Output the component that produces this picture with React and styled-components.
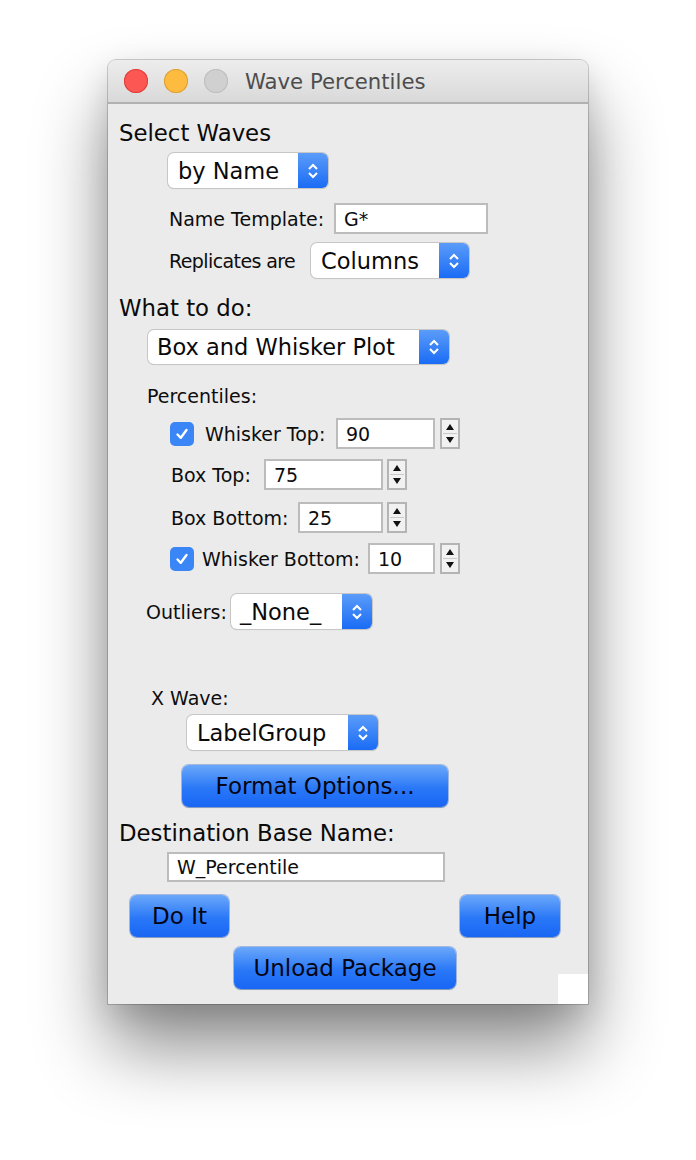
import React from "react";
import styled, { createGlobalStyle } from "styled-components";

const GlobalStyle = createGlobalStyle`
  html, body {
    margin: 0;
    padding: 0;
    background: #ffffff;
  }
  body {
    font-family: "Lucida Grande", "DejaVu Sans", sans-serif;
    color: #111;
  }
`;

const Page = styled.div`
  width: 696px;
  height: 1160px;
  padding: 60px 0 0 108px;
  box-sizing: border-box;
  overflow: hidden;
`;

const Window = styled.div`
  position: relative;
  width: 480px;
  height: 944px;
  background: #ebebeb;
  border-radius: 8px 8px 0 0;
  box-shadow: 0 0 0 1px rgba(0, 0, 0, 0.18), 0 44px 72px rgba(0, 0, 0, 0.45),
    0 10px 30px rgba(0, 0, 0, 0.12);
  display: flex;
  flex-direction: column;
`;

const TitleBar = styled.div`
  height: 42px;
  flex-shrink: 0;
  display: flex;
  align-items: center;
  padding-left: 16px;
  gap: 16px;
  border-radius: 8px 8px 0 0;
  background: linear-gradient(#ededed, #d9d9d9);
  border-bottom: 2px solid #b1b1b1;
`;

const Light = styled.span`
  width: 24px;
  height: 24px;
  border-radius: 50%;
  background: ${(p) => p.$color};
  box-shadow: inset 0 0 0 1px ${(p) => p.$edge};
`;

const Title = styled.div`
  font-size: 21.2px;
  color: #4d4d4d;
  margin-left: 1px;
`;

const Content = styled.div`
  display: flex;
  flex-direction: column;
`;

const Row = styled.div`
  display: flex;
  align-items: center;
  height: ${(p) => p.$h}px;
  margin-top: ${(p) => p.$mt}px;
  padding-left: ${(p) => p.$pl || 0}px;
`;

const Heading = styled.div`
  font-size: 22.8px;
  color: #0a0a0a;
  white-space: nowrap;
`;

const Label = styled.span`
  font-size: 19px;
  color: #0d0d0d;
  white-space: nowrap;
  width: ${(p) => (p.$w ? `${p.$w}px` : "auto")};
  flex-shrink: 0;
  letter-spacing: ${(p) => p.$ls || 0}px;
`;

const PopupBox = styled.div`
  display: flex;
  align-items: stretch;
  width: ${(p) => p.$w}px;
  height: 100%;
  margin-left: ${(p) => p.$ml || 0}px;
  box-sizing: border-box;
  border-radius: 6px;
  background: #fff;
  box-shadow: 0 0 0 1px #c6c6c6, 0 1px 1px rgba(0, 0, 0, 0.15);
  overflow: hidden;
`;

const PopupText = styled.div`
  flex: 1;
  display: flex;
  align-items: center;
  padding-left: ${(p) => p.$pad || 10}px;
  font-size: 22.5px;
  color: #0a0a0a;
  white-space: nowrap;
`;

const PopupArrow = styled.div`
  width: 30px;
  display: flex;
  align-items: center;
  justify-content: center;
  background: linear-gradient(#5b9cf9, #1a6cf5);
`;

const Field = styled.div`
  width: ${(p) => p.$w}px;
  height: 100%;
  margin-left: ${(p) => p.$ml || 0}px;
  box-sizing: border-box;
  border: 2px solid #bcbcbc;
  background: #fff;
  display: flex;
  align-items: center;
  padding-left: 8px;
  font-size: 19px;
  color: #0d0d0d;
`;

const StepperBox = styled.div`
  width: ${(p) => p.$w || 20}px;
  height: 100%;
  margin-left: ${(p) => p.$ml || 4}px;
  box-sizing: border-box;
  border: 2px solid #b4b4b4;
  background: #f1f1f1;
  display: flex;
  align-items: center;
  justify-content: center;
`;

const Check = styled.div`
  width: 24px;
  height: 24px;
  border-radius: 5px;
  background: #3a86f7;
  display: flex;
  align-items: center;
  justify-content: center;
  margin-right: ${(p) => p.$mr}px;
  flex-shrink: 0;
`;

const Button = styled.div`
  width: ${(p) => p.$w}px;
  height: 42px;
  margin-left: ${(p) => p.$ml || 0}px;
  box-sizing: border-box;
  border-radius: 7px;
  background: linear-gradient(#6ba8fa, #2a78f7 55%, #1866f4);
  box-shadow: 0 0 0 1px rgba(30, 90, 200, 0.35), 0 1px 1px rgba(0, 0, 0, 0.2);
  display: flex;
  align-items: center;
  justify-content: center;
  font-size: 23px;
  color: #050514;
  white-space: nowrap;
`;

const Spacer = styled.div`
  flex: 1;
`;

const Grip = styled.div`
  position: absolute;
  right: 0;
  bottom: 0;
  width: 30px;
  height: 30px;
  background: #ffffff;
`;

function Chevrons() {
  return (
    <svg width="12" height="20" viewBox="0 0 12 20">
      <path d="M2 8 L6 4 L10 8" fill="none" stroke="#fff" strokeWidth="2" />
      <path d="M2 12 L6 16 L10 12" fill="none" stroke="#fff" strokeWidth="2" />
    </svg>
  );
}

function Popup({ w, ml, pad, children }) {
  return (
    <PopupBox $w={w} $ml={ml}>
      <PopupText $pad={pad}>{children}</PopupText>
      <PopupArrow>
        <Chevrons />
      </PopupArrow>
    </PopupBox>
  );
}

function Stepper({ ml }) {
  return (
    <StepperBox $ml={ml}>
      <svg width="16" height="27" viewBox="0 0 16 27">
        <polygon points="8,4 12,10 4,10" fill="#111" />
        <line x1="1" y1="13.5" x2="15" y2="13.5" stroke="#c9c9c9" strokeWidth="1" />
        <polygon points="4,17 12,17 8,23" fill="#111" />
      </svg>
    </StepperBox>
  );
}

function CheckBox({ mr }) {
  return (
    <Check $mr={mr}>
      <svg width="16" height="16" viewBox="0 0 16 16">
        <path d="M3.5 8.5 L6.8 11.8 L12.5 4" fill="none" stroke="#fff" strokeWidth="2.4" strokeLinecap="round" strokeLinejoin="round" />
      </svg>
    </Check>
  );
}

export default function App() {
  return (
    <Page>
      <GlobalStyle />
      <Window>
        <TitleBar>
          <Light $color="#fc5753" $edge="#de3f3b" />
          <Light $color="#fdbc40" $edge="#de9f34" />
          <Light $color="#d0d0d0" $edge="#bdbdbd" />
          <Title>Wave Percentiles</Title>
        </TitleBar>
        <Content>
          <Row $h={28} $mt={15} $pl={11}>
            <Heading>Select Waves</Heading>
          </Row>
          <Row $h={35} $mt={6} $pl={60}>
            <Popup w={160}>by Name</Popup>
          </Row>
          <Row $h={31} $mt={15} $pl={61}>
            <Label $w={165}>Name Template:</Label>
            <Field $w={154}>G*</Field>
          </Row>
          <Row $h={35} $mt={9} $pl={61}>
            <Label $w={142} $ls={-0.6}>Replicates are</Label>
            <Popup w={158}>Columns</Popup>
          </Row>
          <Row $h={28} $mt={16} $pl={11}>
            <Heading>What to do:</Heading>
          </Row>
          <Row $h={34} $mt={8} $pl={40}>
            <Popup w={301} pad={9}>Box and Whisker Plot</Popup>
          </Row>
          <Row $h={24} $mt={20} $pl={39}>
            <Label>Percentiles:</Label>
          </Row>
          <Row $h={31} $mt={10} $pl={62}>
            <CheckBox mr={11} />
            <Label $w={131}>Whisker Top:</Label>
            <Field $w={99}>90</Field>
            <Stepper ml={5} />
          </Row>
          <Row $h={31} $mt={10} $pl={63}>
            <Label $w={93}>Box Top:</Label>
            <Field $w={119}>75</Field>
            <Stepper ml={4} />
          </Row>
          <Row $h={31} $mt={12} $pl={63}>
            <Label $w={127}>Box Bottom:</Label>
            <Field $w={85}>25</Field>
            <Stepper ml={4} />
          </Row>
          <Row $h={31} $mt={10} $pl={62}>
            <CheckBox mr={8} />
            <Label $w={166}>Whisker Bottom:</Label>
            <Field $w={67}>10</Field>
            <Stepper ml={5} />
          </Row>
          <Row $h={35} $mt={20} $pl={38}>
            <Label $w={85}>Outliers:</Label>
            <Popup w={141} pad={9}>_None_</Popup>
          </Row>
          <Row $h={24} $mt={57} $pl={43}>
            <Label>X Wave:</Label>
          </Row>
          <Row $h={35} $mt={5} $pl={79}>
            <Popup w={191}>LabelGroup</Popup>
          </Row>
          <Row $h={42} $mt={15} $pl={74}>
            <Button $w={266}>Format Options...</Button>
          </Row>
          <Row $h={28} $mt={12} $pl={11}>
            <Heading>Destination Base Name:</Heading>
          </Row>
          <Row $h={30} $mt={5} $pl={59}>
            <Field $w={278}>W_Percentile</Field>
          </Row>
          <Row $h={42} $mt={13} $pl={22}>
            <Button $w={99}>Do It</Button>
            <Spacer />
            <Button $w={100}>Help</Button>
            <div style={{ width: 28 }} />
          </Row>
          <Row $h={42} $mt={10} $pl={126}>
            <Button $w={222}>Unload Package</Button>
          </Row>
        </Content>
        <Grip />
      </Window>
    </Page>
  );
}
